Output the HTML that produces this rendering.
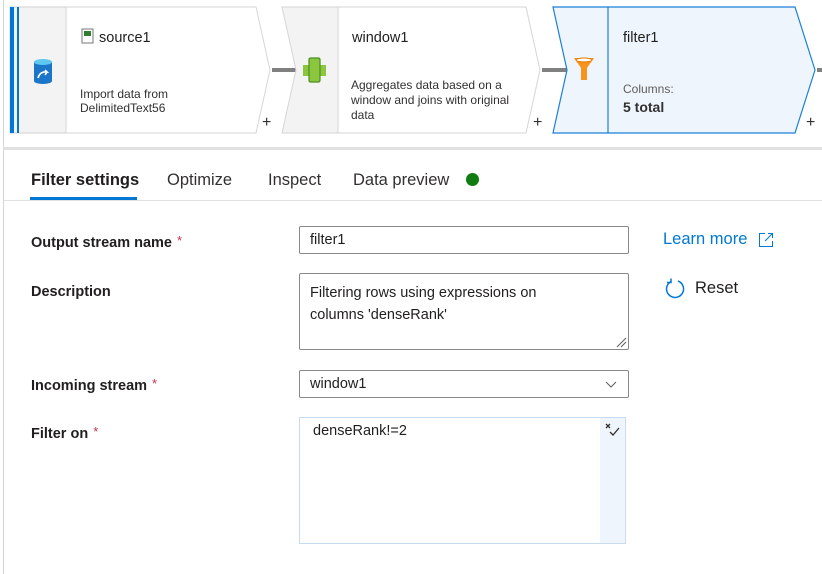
<!DOCTYPE html>
<html><head><meta charset="utf-8"><style>
*{margin:0;padding:0;box-sizing:border-box}
body{width:822px;height:574px;background:#fff;font-family:"Segoe UI","Liberation Sans",sans-serif;color:#323130;position:relative;overflow:hidden}
.a{position:absolute}
.lbl{font-size:14.5px;font-weight:600;color:#201f1e;left:31px}
.star{color:#c4314b;font-weight:400;margin-left:5px;font-size:13px;vertical-align:2px}
.box{border:1px solid #8a8886;border-radius:2px;font-size:14.5px;color:#201f1e}
.tab{top:171px;font-size:16.5px;color:#323130}
</style></head><body>
<div class="a" style="left:3px;top:0;width:1px;height:574px;background:#d6d6d6"></div>
<div class="a" style="left:3px;top:147px;width:819px;height:3px;background:#e1e1e1"></div>
<svg class="a" style="left:0;top:0" width="822" height="147">
 <rect x="10" y="7" width="56" height="126" fill="#f3f3f3" stroke="#d0d0d0"/>
 <rect x="10" y="7" width="4" height="126" fill="#0078d4"/>
 <rect x="17" y="7" width="2" height="126" fill="#0078d4"/>
 <path d="M66 7 H256 L270 70 L256 133 H66 Z" fill="#fff" stroke="#d6d6d6"/>
 <path d="M34 62 v19 a9 3 0 0 0 18 0 v-19" fill="#1b76c9"/>
 <ellipse cx="43" cy="62" rx="9" ry="3" fill="#5ec8ef"/>
 <path d="M38 78 q2 -7 9 -6 l-2 -2 M47 72 l-2 3" stroke="#fff" stroke-width="1.6" fill="none"/>
 <rect x="82" y="29" width="11" height="14" fill="#fff" stroke="#777"/>
 <rect x="84" y="31" width="7" height="5" fill="#2e7d32"/>
 <text x="99" y="42" font-size="14.5" font-family="Segoe UI,Liberation Sans,sans-serif" fill="#201f1e">source1</text>
 <text x="80" y="98" font-size="12" font-family="Segoe UI,Liberation Sans,sans-serif" fill="#323130">Import data from</text>
 <text x="80" y="112" font-size="12" font-family="Segoe UI,Liberation Sans,sans-serif" fill="#323130">DelimitedText56</text>
 <text x="262" y="127" font-size="16" fill="#323130" font-family="Liberation Sans">+</text>
 <rect x="272" y="68" width="25" height="4" fill="#808080"/>
 <path d="M282 7 H338 V133 H282 L296 70 Z" fill="#f3f3f3" stroke="#d6d6d6"/>
 <path d="M338 7 H526 L540 70 L526 133 H338 Z" fill="#fff" stroke="#d6d6d6"/>
 <rect x="303" y="65" width="23" height="11" fill="#8cc63f"/>
 <rect x="309" y="58" width="11" height="24" rx="1.5" fill="#8cc63f" stroke="#4a8f22" stroke-width="1.2"/>
 <text x="352" y="42" font-size="14.5" font-family="Segoe UI,Liberation Sans,sans-serif" fill="#201f1e">window1</text>
 <text x="351" y="89" font-size="12" font-family="Segoe UI,Liberation Sans,sans-serif" fill="#323130">Aggregates data based on a</text>
 <text x="351" y="104" font-size="12" font-family="Segoe UI,Liberation Sans,sans-serif" fill="#323130">window and joins with original</text>
 <text x="351" y="119" font-size="12" font-family="Segoe UI,Liberation Sans,sans-serif" fill="#323130">data</text>
 <text x="533" y="127" font-size="16" fill="#323130" font-family="Liberation Sans">+</text>
 <rect x="542" y="68" width="25" height="4" fill="#808080"/>
 <path d="M553 7 H795 L815 70 L795 133 H553 L567 70 Z" fill="#eef5fc" stroke="#1b80d8" stroke-width="1.2"/>
 <line x1="608" y1="7" x2="608" y2="133" stroke="#1b80d8" stroke-width="1.2"/>
 <path d="M574 58 H594 L587 68 V80 H581 V68 Z" fill="#f7941d"/>
 <ellipse cx="584" cy="60" rx="8" ry="2" fill="#fff" stroke="#e07b00"/>
 <text x="623" y="42" font-size="14.5" font-family="Segoe UI,Liberation Sans,sans-serif" fill="#201f1e">filter1</text>
 <text x="623" y="93" font-size="12" font-family="Segoe UI,Liberation Sans,sans-serif" fill="#605e5c">Columns:</text>
 <text x="623" y="112" font-size="14" font-weight="600" font-family="Segoe UI,Liberation Sans,sans-serif" fill="#323130">5 total</text>
 <text x="806" y="127" font-size="16" fill="#323130" font-family="Liberation Sans">+</text>
 <rect x="817" y="68" width="5" height="4" fill="#808080"/>
</svg>
<div class="a tab" style="left:31px;font-weight:600;color:#201f1e">Filter settings</div>
<div class="a" style="left:30px;top:197px;width:107px;height:3px;background:#0078d4"></div>
<div class="a tab" style="left:167px">Optimize</div>
<div class="a tab" style="left:268px">Inspect</div>
<div class="a tab" style="left:353px">Data preview</div>
<div class="a" style="left:466px;top:173px;width:13px;height:13px;border-radius:50%;background:#107c10"></div>
<div class="a" style="left:4px;top:200px;width:818px;height:1px;background:#e1e1e1"></div>

<div class="a lbl" style="top:233px">Output stream name<span class="star">*</span></div>
<div class="a box" style="left:299px;top:226px;width:330px;height:28px;padding:5px 10px">filter1</div>
<div class="a lbl" style="top:284px">Description</div>
<div class="a box" style="left:299px;top:273px;width:330px;height:77px;padding:8px 10px;line-height:22px">Filtering rows using expressions on<br>columns 'denseRank'</div>
<svg class="a" style="left:616px;top:337px" width="11" height="11"><path d="M1 10 L10 1 M5 10 L10 5" stroke="#605e5c" stroke-width="1"/></svg>
<div class="a lbl" style="top:376px">Incoming stream<span class="star">*</span></div>
<div class="a box" style="left:299px;top:370px;width:330px;height:28px;padding:5px 10px">window1</div>
<svg class="a" style="left:605px;top:381px" width="12" height="8"><path d="M1 1 L6 6 L11 1" stroke="#605e5c" fill="none"/></svg>
<div class="a lbl" style="top:424px">Filter on<span class="star">*</span></div>
<div class="a" style="left:299px;top:417px;width:327px;height:127px;border:1px solid #c7dcef;background:#fff"></div>
<div class="a" style="left:600px;top:418px;width:25px;height:125px;background:#eef5fc"></div>
<div class="a" style="left:313px;top:423px;font-size:14.5px;color:#201f1e">denseRank!=2</div>
<svg class="a" style="left:605px;top:423px" width="16" height="14"><path d="M1 1 L5 5 M5 1 L1 5" stroke="#323130" stroke-width="1.3"/><path d="M5 9 L8 12 L14 5" stroke="#323130" stroke-width="1.3" fill="none"/></svg>

<div class="a" style="left:663px;top:230px;font-size:16.5px;color:#0078d4">Learn more</div>
<svg class="a" style="left:758px;top:232px" width="16" height="16"><path d="M7 1.5 H1.5 V14.5 H14.5 V9" stroke="#0078d4" fill="none"/><path d="M10 1.5 H14.5 V6 M14.5 1.5 L7 9" stroke="#0078d4" fill="none"/></svg>
<svg class="a" style="left:664px;top:278px" width="22" height="22"><path d="M7 3.5 A8.5 8.5 0 1 0 14 3" stroke="#0078d4" stroke-width="1.5" fill="none"/><path d="M7 0.5 V4.5 H3" stroke="#0078d4" stroke-width="1.5" fill="none"/></svg>
<div class="a" style="left:695px;top:279px;font-size:16.5px;color:#201f1e">Reset</div>
</body></html>
